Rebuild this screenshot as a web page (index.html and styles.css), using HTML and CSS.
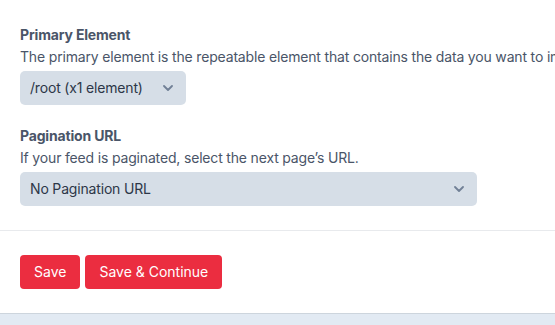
FILE: index.html
```html
<!DOCTYPE html>
<html>
<head>
<meta charset="utf-8">
<link rel="stylesheet" href="styles.css">
</head>
<body>
<div class="card">
  <div class="card-body">
    <div class="field">
      <div class="label">Primary Element</div>
      <div class="help">The primary element is the repeatable element that contains the data you want to import.</div>
      <div class="select select-short">
        <span class="select-text">/root (x1 element)</span>
        <svg class="chev" width="10" height="6" viewBox="0 0 10 6"><path d="M1 1l4 4 4-4" fill="none" stroke="#718096" stroke-width="1.8" stroke-linecap="round" stroke-linejoin="round"/></svg>
      </div>
    </div>
    <div class="field field-second">
      <div class="label">Pagination URL</div>
      <div class="help">If your feed is paginated, select the next page’s URL.</div>
      <div class="select select-wide">
        <span class="select-text">No Pagination URL</span>
        <svg class="chev" width="10" height="6" viewBox="0 0 10 6"><path d="M1 1l4 4 4-4" fill="none" stroke="#718096" stroke-width="1.8" stroke-linecap="round" stroke-linejoin="round"/></svg>
      </div>
    </div>
  </div>
  <div class="card-footer">
    <button class="btn">Save</button>
    <button class="btn">Save &amp; Continue</button>
  </div>
</div>
</body>
</html>
```
FILE: styles.css
```css
html, body {
  margin: 0;
  padding: 0;
}
body {
  background: #e2eaf3;
  font-family: Inter, "Noto Sans", sans-serif;
  font-size: 14px;
  line-height: 20px;
  letter-spacing: -0.17px;
  overflow: hidden;
  width: 555px;
  height: 325px;
}
.card {
  background: #ffffff;
  border-bottom: 1px solid #cdd5dd;
  white-space: nowrap;
  overflow: hidden;
}
.card-body {
  padding: 25px 20px 24px 20px;
}
.label {
  font-weight: 700;
  color: #4a5568;
  margin-bottom: 2px;
}
.help {
  color: #4a5568;
  margin-bottom: 4px;
}
.field-second {
  margin-top: 21px;
}
.select {
  display: flex;
  align-items: center;
  justify-content: space-between;
  height: 34px;
  box-sizing: border-box;
  background: #d6dee7;
  border-radius: 5px;
  padding: 0 13px 0 10px;
  color: #2d3748;
}
.select-short {
  width: 166px;
}
.select-wide {
  width: 457px;
}
.chev {
  display: block;
}
.card-footer {
  border-top: 1px solid #e8eaed;
  padding: 24px 20px 24px 20px;
  display: flex;
  gap: 5px;
}
.btn {
  font-family: inherit;
  font-size: 14px;
  line-height: 20px;
  letter-spacing: 0;
  height: 34px;
  padding: 0 14px;
  border: none;
  border-radius: 4px;
  background: #eb2d40;
  color: #ffffff;
}
```
